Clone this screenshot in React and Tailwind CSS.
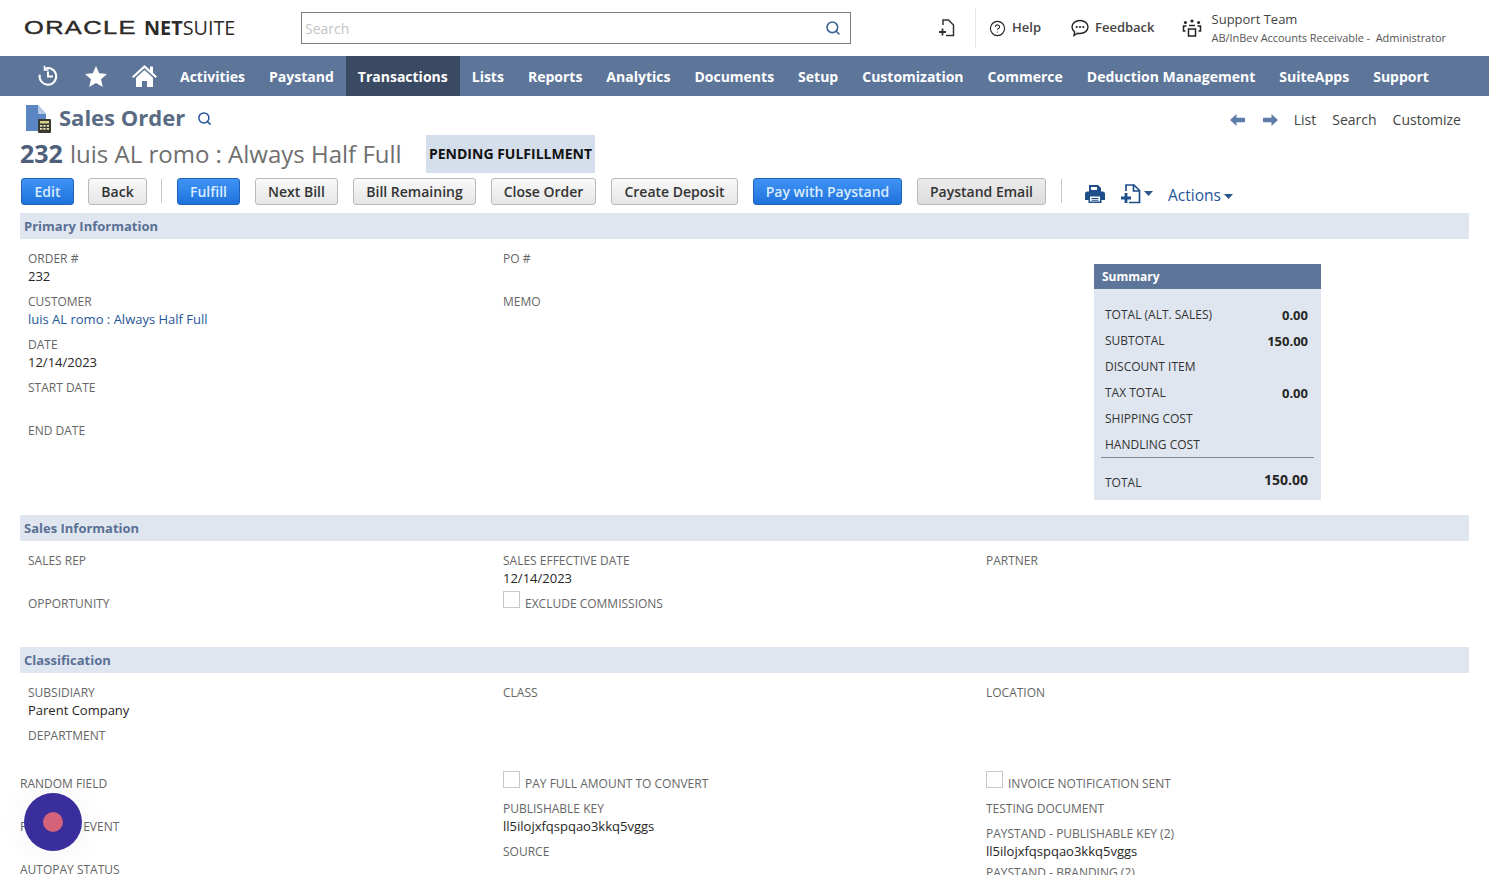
import React from "react";
import { Search, CircleHelp } from "lucide-react";

const navItems = [
  "Activities",
  "Paystand",
  "Transactions",
  "Lists",
  "Reports",
  "Analytics",
  "Documents",
  "Setup",
  "Customization",
  "Commerce",
  "Deduction Management",
  "SuiteApps",
  "Support",
];

const BlueBtn = ({ children, className = "" }) => (
  <button className={`h-[27px] rounded-[3px] border border-[#1f63b8] bg-gradient-to-b from-[#3f93f5] to-[#1f72dc] text-[14px] text-[#d9ecff] font-semibold ${className}`}>
    {children}
  </button>
);

const GrayBtn = ({ children, className = "from-[#fafafa] to-[#e5e5e5]" }) => (
  <button className={`h-[27px] rounded-[3px] border border-[#b9b9b9] bg-gradient-to-b text-[14px] text-[#333] font-semibold ${className}`}>
    {children}
  </button>
);

const Field = ({ label, value, link, className = "h-[43px]" }) => (
  <div className={className}>
    <div className="h-[17px] text-[12px] leading-[18px] text-[#666]">{label}</div>
    {value && (
      <div className={`h-[18px] text-[13px] leading-[18px] ${link ? "text-[#255599]" : "text-[#262626]"}`}>{value}</div>
    )}
  </div>
);

const CheckField = ({ label, className = "" }) => (
  <div className={`flex items-start ${className}`}>
    <span className="w-[17px] h-[17px] border border-[#c9c9c9] bg-white mr-[5px]" />
    <span className="mt-[4px] text-[12px] leading-[18px] text-[#666]">{label}</span>
  </div>
);

const Section = ({ title }) => (
  <div className="h-[26px] bg-[#e0e6ef] pl-[4px] text-[13px] leading-[26px] font-bold text-[#5a7095]">{title}</div>
);

const SummaryRow = ({ label, value }) => (
  <div className="h-[26px] flex items-center justify-between pl-[11px] pr-[13px] text-[12px] text-[#333]">
    <span>{label}</span>
    {value && <span className="text-[13px] font-bold text-[#262626] pt-[2px]">{value}</span>}
  </div>
);

const Caret = ({ className = "" }) => (
  <svg width="9" height="5" viewBox="0 0 9 5" className={className}>
    <path d="M0 0h9L4.500 5z" fill="#2a5488" />
  </svg>
);

const Logo = () => (
  <div className="flex items-center text-[#2d2a28] leading-none select-none">
    <span className="w-[120px] origin-left scale-x-[1.34] whitespace-nowrap font-['Liberation_Sans',sans-serif] text-[19px] tracking-[1px]" style={{ WebkitTextStroke: "0.4px #2d2a28" }}>ORACLE</span>
    <span className="text-[19.8px] font-bold">NET</span>
    <span className="text-[19.8px]">SUITE</span>
  </div>
);

const RecentIcon = () => (
  <svg width="22" height="22" viewBox="0 0 22 22" fill="none" stroke="#fff" strokeWidth="2">
    <path d="M8 3.600A8.300 8.300 0 1 1 2.800 9.600" />
    <path d="M7.500 0.800v4.200h4" strokeWidth="1.600" />
    <path d="M11 6.500v5h5" />
  </svg>
);

const StarIcon = () => (
  <svg width="22" height="21" viewBox="0 0 22 21" fill="#fff">
    <path d="M11 0l3.200 7.200 7.800.8-5.900 5.200 1.700 7.700L11 17l-6.800 3.900 1.700-7.700L0 8l7.800-.8z" />
  </svg>
);

const HomeIcon = () => (
  <svg width="25" height="22" viewBox="0 0 25 22" fill="#fff">
    <path d="M12.500 0L0 11.500l1.500 1.600L12.500 3l11 10.100 1.500-1.600-4-3.700V1.500h-3v3.600z" />
    <path d="M12.500 5L4 12.800V22h6v-6h5v6h6v-9.200z" />
  </svg>
);

const TeamIcon = () => (
  <svg width="20" height="20" viewBox="0 0 20 20" fill="none" stroke="#222" strokeWidth="1.500">
    <circle cx="10" cy="3" r="1.600" fill="#222" stroke="none" />
    <circle cx="3.400" cy="4.600" r="1.500" fill="#222" stroke="none" />
    <circle cx="16.600" cy="4.600" r="1.500" fill="#222" stroke="none" />
    <path d="M4.500 8H1.500v5h2M15.500 8h3v5h-2" />
    <path d="M7 7.500h6M6.500 11h7v7h-7z" />
  </svg>
);

const FeedbackIcon = () => (
  <svg width="18" height="18" viewBox="0 0 18 18" fill="none" stroke="#222" strokeWidth="1.400">
    <path d="M9 1.500c4.400 0 8 2.900 8 6.500s-3.600 6.500-8 6.500c-.9 0-1.700-.1-2.500-.3L3 16.500l.7-3.500C2 11.800 1 10 1 8c0-3.600 3.600-6.500 8-6.500z" />
    <circle cx="5.700" cy="8" r="1.100" fill="#222" stroke="none" />
    <circle cx="9" cy="8" r="1.100" fill="#222" stroke="none" />
    <circle cx="12.300" cy="8" r="1.100" fill="#222" stroke="none" />
  </svg>
);

const RecordIcon = () => (
  <svg width="26" height="28" viewBox="0 0 26 28">
    <path d="M1 0h12l8 9v17H1z" fill="#5b86c4" />
    <path d="M13 0l8 9h-8z" fill="#b5c8e4" />
    <rect x="13" y="14" width="13" height="14" rx="1" fill="#3a3a33" />
    <rect x="15" y="16" width="9" height="2.500" fill="#d8cf8c" />
    <path d="M15 20h2.300v1.700h-2.300zM18.300 20h2.300v1.700h-2.300zM21.700 20h2.300v1.700h-2.300zM15 23h2.300v1.700h-2.300zM18.300 23h2.300v1.700h-2.300zM21.700 23h2.300v1.700h-2.300z" fill="#e4e0b8" />
  </svg>
);

const PrintIcon = () => (
  <svg width="20" height="20" viewBox="0 0 20 20" fill="#1f4f8b">
    <path d="M4 1h9l3 3v4H4z" />
    <path d="M6 3h6v3H6z" fill="#fff" />
    <path d="M2.500 7.500h15A2.500 2.500 0 0 1 20 10v6h-3.500v3h-13v-3H0v-6a2.500 2.500 0 0 1 2.500-2.500z" />
    <path d="M5 12.500h10V17.500H5z" fill="#fff" />
    <path d="M6.500 14h7v.9h-7zM6.500 15.800h7v.9h-7z" fill="#1f4f8b" />
  </svg>
);

const NewIcon = () => (
  <svg width="21" height="20" viewBox="0 0 21 20" fill="none" stroke="#1f4f8b" strokeWidth="1.700">
    <path d="M6 7V1h8l5.500 5.500V18.500H9" />
    <path d="M13.500 1v6h6" />
    <path d="M6 9v10M1 14h10" strokeWidth="2.800" />
  </svg>
);

const AddPageIcon = () => (
  <svg width="17" height="18" viewBox="0 0 17 18" fill="none" stroke="#333" strokeWidth="1.500">
    <path d="M5 6V1h5.500L15.500 6v10.500H8" />
    <path d="M4.500 9.500v7M1 13h7" strokeWidth="1.800" />
  </svg>
);

const ThickArrow = ({ flip }) => (
  <svg width="15" height="12" viewBox="0 0 15 12" className={flip ? "-scale-x-100" : ""}>
    <path d="M6.500 0L0 6l6.500 6V8.200H15V3.800H6.500z" fill="#5d7ea8" />
  </svg>
);

export default function App() {
  return (
    <div className="relative w-[1489px] h-[875px] overflow-hidden bg-white font-['Open_Sans',sans-serif]">
      {/* Top header */}
      <div className="h-[56px] flex items-center">
        <div className="w-[301px] pl-[24px]"><Logo /></div>
        <div className="w-[550px] h-[32px] border border-[#7a7a7a] flex items-center justify-between pl-[3px] pr-[9px]">
          <span className="text-[14px] text-[#c4c4c4]">Search</span>
          <Search className="w-[16px] h-[16px] text-[#3c6595]" strokeWidth={2.4} />
        </div>
        <div className="ml-[87px] w-[37px] flex">
          <AddPageIcon />
        </div>
        <div className="h-[40px] border-l border-[#e6e6e6] flex items-center pl-[13px]">
          <CircleHelp className="w-[17px] h-[17px] text-[#222]" strokeWidth={1.6} />
          <span className="ml-[6px] text-[13px] font-semibold text-[#444]">Help</span>
          <span className="ml-[30px]"><FeedbackIcon /></span>
          <span className="ml-[6px] text-[13px] font-semibold text-[#444]">Feedback</span>
          <span className="ml-[27px]"><TeamIcon /></span>
          <div className="ml-[10px] flex flex-col">
            <span className="text-[13px] leading-[18px] text-[#444]">Support Team</span>
            <span className="pt-[1px] text-[11px] leading-[18px] tracking-[-0.05px] text-[#555]">AB/InBev Accounts Receivable&nbsp;-&nbsp; Administrator</span>
          </div>
        </div>
      </div>

      {/* Main nav */}
      <div className="h-[40px] bg-[#5d7599] flex items-center pl-[37px]">
        <div className="flex items-center w-[131px]">
          <RecentIcon />
          <span className="ml-[26px]"><StarIcon /></span>
          <span className="ml-[25px]"><HomeIcon /></span>
        </div>
        {navItems.map((name) => (
          <div
            key={name}
            className={`h-[40px] px-[12px] flex items-center text-[14px] font-bold whitespace-nowrap text-white ${name === "Transactions" ? "bg-[#3a4a63]" : ""}`}
          >
            {name}
          </div>
        ))}
      </div>

      {/* Page title */}
      <div className="h-[39px] pt-[8px] flex items-center justify-between pl-[25px] pr-[28px]">
        <div className="flex items-center mb-[2px]">
          <RecordIcon />
          <span className="ml-[8px] -mt-[3px] text-[22px] font-bold text-[#5a6b84]">Sales Order</span>
          <Search className="ml-[12px] w-[15px] h-[15px] text-[#255599]" strokeWidth={2.4} />
        </div>
        <div className="flex items-center text-[14px] text-[#444]">
          <ThickArrow />
          <span className="ml-[18px]"><ThickArrow flip /></span>
          <span className="ml-[16px]">List</span>
          <span className="ml-[16px]">Search</span>
          <span className="ml-[16px]">Customize</span>
        </div>
      </div>

      <div className="h-[38px] flex items-center pl-[20px]">
        <span className="w-[50px] text-[25px] font-bold text-[#4d5f7a]">232</span>
        <span className="w-[356px] text-[24px] text-[#6f6f6f]">luis AL romo : Always Half Full</span>
        <span className="h-[38px] w-[169px] pb-[2px] flex items-center justify-center bg-[#d5dfec] text-[14px] font-bold text-[#111]">PENDING FULFILLMENT</span>
      </div>

      {/* Button row */}
      <div className="mt-[2px] h-[32px] flex items-center pl-[21px]">
        <BlueBtn className="w-[53px]">Edit</BlueBtn>
        <GrayBtn className="ml-[14px] w-[59px] from-[#fafafa] to-[#e5e5e5]">Back</GrayBtn>
        <span className="ml-[14px] h-[24px] border-l border-[#c8c8c8]" />
        <BlueBtn className="ml-[15px] w-[63px]">Fulfill</BlueBtn>
        <GrayBtn className="ml-[15px] w-[83px] from-[#fafafa] to-[#e5e5e5]">Next Bill</GrayBtn>
        <GrayBtn className="ml-[15px] w-[123px] from-[#fafafa] to-[#e5e5e5]">Bill Remaining</GrayBtn>
        <GrayBtn className="ml-[15px] w-[105px] from-[#fafafa] to-[#e5e5e5]">Close Order</GrayBtn>
        <GrayBtn className="ml-[15px] w-[127px] from-[#fafafa] to-[#e5e5e5]">Create Deposit</GrayBtn>
        <BlueBtn className="ml-[15px] w-[149px]">Pay with Paystand</BlueBtn>
        <GrayBtn className="ml-[15px] w-[129px] from-[#ececec] to-[#dcdcdc]">Paystand Email</GrayBtn>
        <span className="ml-[15px] h-[24px] border-l border-[#c8c8c8]" />
        <span className="ml-[23px] mt-[6px]"><PrintIcon /></span>
        <span className="ml-[15px] mt-[6px]"><NewIcon /></span>
        <Caret className="ml-[3px] mt-[5px]" />
        <span className="ml-[15px] mt-[10px] text-[15.5px] text-[#255599]">Actions</span>
        <Caret className="ml-[3px] mt-[10px]" />
      </div>

      {/* Sections */}
      <div className="mt-[6px] pl-[20px] pr-[20px]">
        <Section title="Primary Information" />
        <div className="h-[276px] pt-[11px] flex pl-[8px]">
          <div className="w-[475px]">
            <Field label="ORDER #" value="232" />
            <Field label="CUSTOMER" value="luis AL romo : Always Half Full" link />
            <Field label="DATE" value="12/14/2023" />
            <Field label="START DATE" />
            <Field label="END DATE" />
          </div>
          <div className="w-[483px]">
            <Field label="PO #" />
            <Field label="MEMO" />
          </div>
          <div className="pl-[108px] pt-[14px]">
            <div className="w-[227px] h-[236px] bg-[#e0e6ef]">
              <div className="h-[25px] bg-[#5d7599] pl-[8px] text-[12px] leading-[25px] font-bold text-white">Summary</div>
              <div className="pt-[13px]">
                <SummaryRow label="TOTAL (ALT. SALES)" value="0.00" />
                <SummaryRow label="SUBTOTAL" value="150.00" />
                <SummaryRow label="DISCOUNT ITEM" />
                <SummaryRow label="TAX TOTAL" value="0.00" />
                <SummaryRow label="SHIPPING COST" />
                <SummaryRow label="HANDLING COST" />
              </div>
              <div className="mx-[7px] -mt-[1px] border-t border-[#7f8a99]" />
              <div className="mt-[9px] flex items-center justify-between pl-[11px] pr-[13px] text-[12px] text-[#333]">
                <span className="pt-[7px]">TOTAL</span>
                <span className="text-[14px] font-bold text-[#262626]">150.00</span>
              </div>
            </div>
          </div>
        </div>

        <Section title="Sales Information" />
        <div className="h-[106px] pt-[11px] flex pl-[8px]">
          <div className="w-[475px]">
            <Field label="SALES REP" />
            <Field label="OPPORTUNITY" />
          </div>
          <div className="w-[483px]">
            <Field label="SALES EFFECTIVE DATE" value="12/14/2023" />
            <CheckField label="EXCLUDE COMMISSIONS" className="-mt-[4px]" />
          </div>
          <div>
            <Field label="PARTNER" />
          </div>
        </div>

        <Section title="Classification" />
        <div className="h-[86px] pt-[11px] flex pl-[8px]">
          <div className="w-[475px]">
            <Field label="SUBSIDIARY" value="Parent Company" />
            <Field label="DEPARTMENT" />
          </div>
          <div className="w-[483px]">
            <Field label="CLASS" />
          </div>
          <div>
            <Field label="LOCATION" />
          </div>
        </div>

        {/* Custom fields */}
        <div className="flex">
          <div className="w-[483px] pt-[16px]">
            <Field label="RANDOM FIELD" />
            <Field label="PAYSTAND EVENT" />
            <Field label="AUTOPAY STATUS" />
          </div>
          <div className="w-[483px] pt-[12px]">
            <CheckField label="PAY FULL AMOUNT TO CONVERT" className="h-[29px]" />
            <Field label="PUBLISHABLE KEY" value="ll5ilojxfqspqao3kkq5vggs" />
            <Field label="SOURCE" />
          </div>
          <div className="pt-[12px]">
            <CheckField label="INVOICE NOTIFICATION SENT" className="h-[29px]" />
            <Field label="TESTING DOCUMENT" className="h-[25px]" />
            <Field label="PAYSTAND - PUBLISHABLE KEY (2)" value="ll5ilojxfqspqao3kkq5vggs" className="h-[39px]" />
            <Field label="PAYSTAND - BRANDING (2)" />
          </div>
        </div>
      </div>

      {/* Floating recorder bubble */}
      <div className="absolute left-[24px] top-[793px] w-[58px] h-[58px] rounded-full bg-[#3a2e9c] flex items-center justify-center shadow-[0_0_30px_rgba(0,0,0,0.06)]">
        <span className="w-[20px] h-[20px] rounded-full bg-[#d4627a]" />
      </div>
    </div>
  );
}
